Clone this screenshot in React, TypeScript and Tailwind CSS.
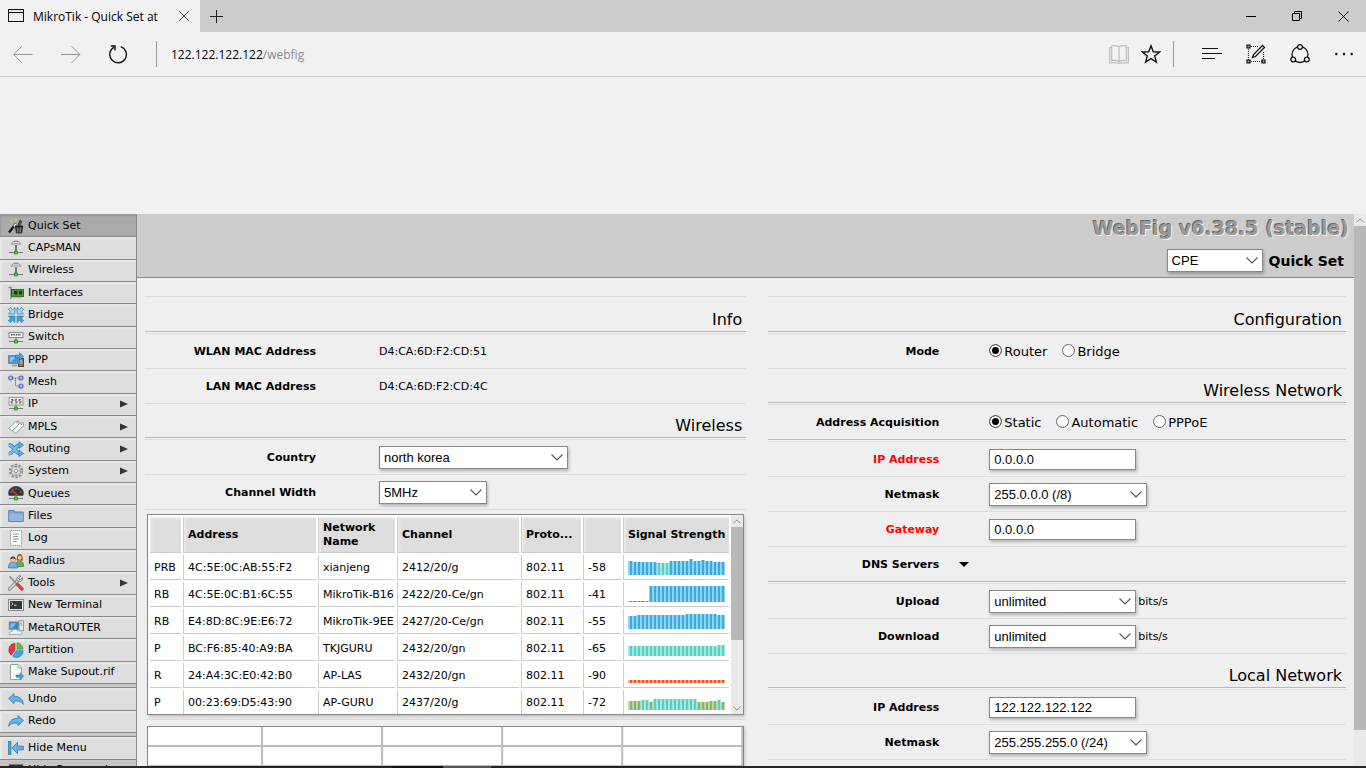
import React, { type ReactNode } from "react";

/* ---------- Sidebar icons (16 x 16) ---------- */

const Svg16 = ({ children }: { children: ReactNode }) => (
  <svg viewBox="0 0 16 16" className="h-4 w-4 shrink-0" aria-hidden="true">
    {children}
  </svg>
);

const NetBase = () => (
  <>
    <path d="M1 12.500H15" stroke="#777" />
    <rect x="6.500" y="11" width="3" height="3" fill="#3fd43f" stroke="#1d8a1d" strokeWidth=".7" />
  </>
);

const WandIcon = () => (
  <Svg16>
    <path d="M1 14.500 8 5.500" stroke="#111" strokeWidth="2.200" />
    <path d="M6 8.500 8 5.800" stroke="#eee" strokeWidth="2" />
    <path d="M7.500 8.500h7l-.8 6.500h-5.400z" fill="#3a3a3a" stroke="#111" strokeWidth=".7" />
    <path d="M9.500 9.500v5M11 9.500v5M12.500 9.500v5" stroke="#999" strokeWidth=".6" />
    <path d="M7 8.200h8" stroke="#111" strokeWidth="1.300" />
    <path d="m10 7 2-5 1.800 1.300L12 7.300z" fill="#555" stroke="#222" strokeWidth=".6" />
    <path d="m3.500 1 .5 1.500L5.500 3 4 3.500 3.500 5 3 3.500 1.500 3 3 2.500zM8 0l.4 1.200 1.200.4-1.200.4L8 3.200 7.600 2l-1.200-.4 1.200-.4zM3 6.500l.4.900.9.300-.9.300L3 9l-.3-1-1-.3 1-.3z" fill="#f5d22c" />
  </Svg16>
);

const AntennaIcon = () => (
  <Svg16>
    <path d="M3.800 4.800a4.200 3.600 0 0 1 8.400 0" fill="none" stroke="#8f8f8f" strokeWidth="1.300" />
    <path d="M5.800 5.300a2.200 2 0 0 1 4.400 0" fill="none" stroke="#a5a5a5" strokeWidth="1.200" />
    <path d="M8 5v7" stroke="#555" strokeWidth="1.500" />
    <NetBase />
  </Svg16>
);

const CardIcon = () => (
  <Svg16>
    <path d="M.5 2.500h2.500v11.500" fill="none" stroke="#888" strokeWidth="1.500" />
    <rect x="3.500" y="4.500" width="12" height="7" fill="#4c9a3f" stroke="#2b6b25" />
    <rect x="6" y="6" width="3.500" height="3.500" fill="#23331f" />
    <rect x="11" y="6" width="3" height="3.500" fill="#23331f" />
    <path d="M5 12.500h9" stroke="#d8b03c" strokeWidth="1.500" strokeDasharray="1.500 .7" />
  </Svg16>
);

const BridgeIcon = () => (
  <Svg16>
    <g stroke="#1f7bbd" strokeWidth=".7" strokeLinejoin="round">
      <path d="m.4 2.400 2-2 2.300 2.300L6.900.5v6.400H.5l2.200-2.200z" fill="#a5d9f6" />
      <path d="m15.600 2.400-2-2-2.300 2.300L9.100.5v6.400h6.400l-2.200-2.200z" fill="#a5d9f6" />
      <path d="m.4 13.600 2 2 2.300-2.300 2.200 2.200V9.100H.5l2.200 2.200z" fill="#35a2e4" />
      <path d="m15.600 13.600-2 2-2.300-2.300-2.200 2.200V9.100h6.400l-2.200 2.200z" fill="#35a2e4" />
    </g>
  </Svg16>
);

const SwitchIcon = () => (
  <Svg16>
    <rect x="1" y="3.500" width="14" height="5" fill="#f7f7f7" stroke="#888" />
    <path d="M3 5.800h10" stroke="#444" strokeWidth="1.600" strokeDasharray="1.500 .9" />
    <path d="M8 9v3" stroke="#777" />
    <NetBase />
  </Svg16>
);

const PppIcon = () => (
  <Svg16>
    <rect x="10.500" y="6.500" width="5" height="8" fill="#777" stroke="#444" />
    <path d="M12 9h2.500M12 11h2.500" stroke="#ccc" />
    <rect x=".5" y="3.500" width="10" height="8" fill="#3c98dc" stroke="#8a8a8a" />
    <path d="M2 5h6L3 10H2z" fill="#8cc8f0" />
    <path d="M4 13.500h5" stroke="#999" strokeWidth="1.800" />
    <path d="M7.500 3.300h4V.8l4 3.700-4 3.700V5.700h-4z" fill="#45aef0" stroke="#176fae" strokeWidth=".7" />
  </Svg16>
);

const MeshIcon = () => (
  <Svg16>
    <path d="M5 4h5.500M7.500 4v8H11" fill="none" stroke="#777" strokeDasharray="1.500 .6" />
    <g fill="#b3c1f7" stroke="#4a62c8" strokeWidth="1.200">
      <circle cx="2.700" cy="4" r="2" />
      <circle cx="13" cy="4" r="2" />
      <circle cx="13" cy="12" r="2" />
    </g>
  </Svg16>
);

const IpIcon = () => (
  <Svg16>
    <rect x="1" y="1.500" width="14" height="7.500" fill="#f4f4f4" stroke="#999" />
    <path d="M3 3.500h2v1.600H3V7h2.200M9 3.500H7v1.600h2V7H6.800M13 3.500h-2v1.600h2V7h-2.200" fill="none" stroke="#555" strokeWidth=".9" />
    <path d="M8 9v3" stroke="#777" />
    <NetBase />
  </Svg16>
);

const TagsIcon = () => (
  <Svg16>
    <g fill="#f2f7f5" stroke="#8f9c99" strokeWidth=".9" strokeLinejoin="round">
      <path d="m.7 9.500 7-7 3-.5.3 3-7 7z" />
      <path d="m4.500 12 7.500-8 3.300-.3.200 3-7.500 7.800z" />
    </g>
    <circle cx="13.500" cy="5.200" r=".8" fill="#888" />
    <circle cx="9" cy="3.800" r=".7" fill="#888" />
  </Svg16>
);

const RoutingIcon = () => (
  <Svg16>
    <g fill="none" strokeLinejoin="round">
      <path d="M.8 12.500c6 0 5.500-8.500 11.500-8.500M.8 4c6 0 5.500 8.500 11.500 8.500" stroke="#2478b5" strokeWidth="3.800" />
      <path d="M.8 12.500c6 0 5.500-8.500 11.500-8.500M.8 4c6 0 5.500 8.500 11.500 8.500" stroke="#6fbcf0" strokeWidth="2.500" />
    </g>
    <path d="m11 .8 4.600 3.300L11 7.300zM11 9.200l4.600 3.300-4.600 3z" fill="#58aeea" stroke="#2478b5" strokeWidth=".7" />
  </Svg16>
);

const GearIcon = () => (
  <Svg16>
    <circle cx="8" cy="8" r="6.300" fill="none" stroke="#8d8d8d" strokeWidth="1.800" strokeDasharray="2.400 1.550" />
    <circle cx="8" cy="8" r="4.800" fill="#dcdcdc" stroke="#8d8d8d" strokeWidth=".9" />
    <circle cx="8" cy="8" r="1.700" fill="#eee" stroke="#8d8d8d" strokeWidth=".9" />
    <path d="M8 3.500v2M8 10.500v2M3.500 8h2M10.500 8h2" stroke="#999" />
  </Svg16>
);

const GaugeIcon = () => (
  <Svg16>
    <path d="M1 9.500C-.8 4 3.500.5 8 .5s8.800 3.500 7 9z" fill="#333" stroke="#555" strokeWidth=".8" />
    <path d="M2.500 6h1.500M4.500 3l1 1M8 2V3.500M11.500 3l-1 1M13.500 6H12" stroke="#bbb" strokeWidth=".8" />
    <path d="m4 4 5.500 5.200" stroke="#e6392c" strokeWidth="1.400" />
    <path d="M8 9.500v3" stroke="#777" />
    <NetBase />
  </Svg16>
);

const FolderIcon = () => (
  <Svg16>
    <path d="M.7 13.500v-11h5.500l1.200 1.500h7.900v9.500z" fill="#7ca6d0" stroke="#4f7fb0" strokeWidth=".9" />
    <path d="M1.300 5.500h13.400v7.500H1.300z" fill="#94b8dc" />
  </Svg16>
);

const LogIcon = () => (
  <Svg16>
    <path d="M2.500.5h11v15h-11z" fill="#f6faf9" stroke="#94a8a5" strokeDasharray="1.500 .6" />
    <path d="M5 4h6M5 6.500h5M5 9h6M5 11.500h3.500" stroke="#7fa39d" />
  </Svg16>
);

const UsersIcon = () => (
  <Svg16>
    <path d="M8 13.500c0-5 1.500-5.500 3.700-5.500s3.800 1 3.800 5.500z" fill="#5bb95a" stroke="#2e7a32" strokeWidth=".7" />
    <path d="M8.700 7.500c-.7-9 7-8.500 6 0z" fill="#b34a1c" />
    <circle cx="11.700" cy="4.800" r="2" fill="#f3c9a0" />
    <path d="M.5 15c0-4.500 1.500-5.500 4.500-5.500s4.700 1 4.700 5.500z" fill="#6bb0e8" stroke="#2b6ca8" strokeWidth=".7" />
    <circle cx="5" cy="6.800" r="2.600" fill="#f3c9a0" stroke="#a96b3b" strokeWidth=".5" />
    <path d="M2.300 6.500C2 2.500 8 2.500 7.700 6.500 6.500 5.200 4 5.200 2.300 6.500z" fill="#5b3718" />
  </Svg16>
);

const ToolsIcon = () => (
  <Svg16>
    <path d="m1.500 14 9-9" stroke="#777" strokeWidth="3.400" strokeLinecap="round" />
    <path d="m1.500 14 9-9" stroke="#d5d5d5" strokeWidth="1.900" strokeLinecap="round" />
    <path d="M14.500 2.500 12 5 10.500 3.500 13 1C10 .2 8.300 2.800 9.300 5.300c1 1.700 5.700 2.200 5.200-2.800z" fill="#d5d5d5" stroke="#777" strokeWidth=".8" />
    <path d="m1.500 1.500 7.500 7.500" stroke="#888" strokeWidth="1.700" />
    <path d="m9.500 9.500 4.500 4.500" stroke="#d93f35" strokeWidth="3.300" strokeLinecap="round" />
  </Svg16>
);

const TerminalIcon = () => (
  <Svg16>
    <rect x=".5" y="2.500" width="15" height="11" fill="#e4e4e4" stroke="#8a8a8a" />
    <rect x="2" y="4" width="12" height="8" fill="#33363a" />
    <path d="M3.500 5.500 5 6.700 3.500 8M6 8.300h2.500" fill="none" stroke="#eee" strokeWidth=".9" />
  </Svg16>
);

const MetaIcon = () => (
  <Svg16>
    <rect x="11" y=".7" width="4.500" height="10" fill="#e8e8e8" stroke="#888" strokeWidth=".8" />
    <path d="M12.300 3h2M12.300 5h2" stroke="#999" />
    <rect x="1.200" y="2" width="9.500" height="7.500" fill="#2f86d0" stroke="#8a8a8a" strokeWidth=".9" />
    <path d="M2.500 3.300h6l-4.500 5h-1.500z" fill="#7cbcee" />
    <path d="M1 14.300c-.3-2 1.500-3 3-2.500.8-3 4.500-3.200 5.500-.7 2-.7 4.300 0 4.500 3.200z" fill="#fafafa" stroke="#9a9a9a" strokeWidth=".8" />
  </Svg16>
);

const PieIcon = () => (
  <Svg16>
    <path d="M7 1.300A6.700 6.700 0 0 0 3.300 13.200L7 8z" fill="#e2373c" stroke="#a31c22" strokeWidth=".6" />
    <path d="M9 .8A6.500 6.500 0 0 1 15 7.200H9z" fill="#63c04e" stroke="#3a8a2b" strokeWidth=".6" />
    <path d="M15.200 8.700H8.300l-3.600 5.500c3.800 2.700 10.300.8 10.500-5.500z" fill="#3ea6dc" stroke="#1e75a8" strokeWidth=".6" />
  </Svg16>
);

const SupoutIcon = () => (
  <Svg16>
    <path d="M2.500.5H10l3.500 3.500v11.500h-11z" fill="#f8fbfa" stroke="#8ea29f" />
    <path d="M10 .7V4h3.300" fill="#dbe5e3" stroke="#8ea29f" strokeWidth=".8" />
    <path d="M8 11h4V8.800l3.700 3.300-3.700 3.300v-2.200H8z" fill="#3fa7ec" stroke="#1c6fa9" strokeWidth=".6" />
  </Svg16>
);

const UndoIcon = () => (
  <Svg16>
    <path d="M.6 7.500 6 2.700v2.700c5 0 8.700 1.600 9.300 8-2-3-4.500-3.700-9.300-3.400v2.700z" fill="#65b5ec" stroke="#2478b5" strokeWidth=".8" strokeLinejoin="round" />
  </Svg16>
);

const RedoIcon = () => (
  <Svg16>
    <path d="M15.400 7.500 10 2.700v2.700c-5 0-8.700 1.600-9.300 8 2-3 4.500-3.700 9.300-3.400v2.700z" fill="#65b5ec" stroke="#2478b5" strokeWidth=".8" strokeLinejoin="round" />
  </Svg16>
);

const HideIcon = () => (
  <Svg16>
    <rect x=".6" y="1.500" width="2.300" height="13" fill="#45a7e6" stroke="#1f74b3" strokeWidth=".7" />
    <path d="M3.800 8 9.500 2.500v3.700h5.800v3.600H9.500v3.700z" fill="#65b5ec" stroke="#1f74b3" strokeWidth=".8" />
  </Svg16>
);

const PasswordIcon = () => (
  <Svg16>
    <rect x="1" y="2.500" width="14" height="11" fill="#333" />
  </Svg16>
);

/* ---------- Sidebar ---------- */

type Item = { label: string; icon: () => ReactNode; sub?: boolean };

const mainItems: Item[] = [
  { label: "Quick Set", icon: WandIcon },
  { label: "CAPsMAN", icon: AntennaIcon },
  { label: "Wireless", icon: AntennaIcon },
  { label: "Interfaces", icon: CardIcon },
  { label: "Bridge", icon: BridgeIcon },
  { label: "Switch", icon: SwitchIcon },
  { label: "PPP", icon: PppIcon },
  { label: "Mesh", icon: MeshIcon },
  { label: "IP", icon: IpIcon, sub: true },
  { label: "MPLS", icon: TagsIcon, sub: true },
  { label: "Routing", icon: RoutingIcon, sub: true },
  { label: "System", icon: GearIcon, sub: true },
  { label: "Queues", icon: GaugeIcon },
  { label: "Files", icon: FolderIcon },
  { label: "Log", icon: LogIcon },
  { label: "Radius", icon: UsersIcon },
  { label: "Tools", icon: ToolsIcon, sub: true },
  { label: "New Terminal", icon: TerminalIcon },
  { label: "MetaROUTER", icon: MetaIcon },
  { label: "Partition", icon: PieIcon },
  { label: "Make Supout.rif", icon: SupoutIcon },
];

function MenuItem({ item, active, pressed }: { item: Item; active?: boolean; pressed?: boolean }) {
  const Icon = item.icon;
  const tone = active
    ? "bg-[#aaaaaa] shadow-[inset_1px_1px_2px_#999999]"
    : pressed
      ? "bg-[#c4c4c4]"
      : "bg-[#dddddd] shadow-[inset_2px_2px_2px_#e9e9e9]";
  return (
    <button
      type="button"
      className={`flex min-h-0 w-full flex-1 items-center gap-1 border-b border-[#888888] pr-2 pl-2 text-left text-[11px] leading-[14px] ${tone}`}
    >
      <Icon />
      <span className="flex-1 whitespace-nowrap">{item.label}</span>
      {item.sub && (
        <svg viewBox="0 0 8 8" className="h-2 w-2" aria-hidden="true">
          <path d="M0 .5 8 4 0 7.500z" fill="#333" />
        </svg>
      )}
    </button>
  );
}

function Sidebar() {
  return (
    <nav className="flex w-[137px] shrink-0 flex-col gap-[3px] overflow-hidden border-r border-[#888888] bg-[#c8c8c8]">
      <div className="flex h-[470px] shrink-0 flex-col border-t border-[#999999]">
        {mainItems.map((item, i) => (
          <MenuItem key={item.label} item={item} active={i === 0} />
        ))}
      </div>
      <div className="flex h-[46px] shrink-0 flex-col border-t border-[#888888]">
        <MenuItem item={{ label: "Undo", icon: UndoIcon }} />
        <MenuItem item={{ label: "Redo", icon: RedoIcon }} />
      </div>
      <div className="flex h-[46px] shrink-0 flex-col border-t border-[#888888]">
        <MenuItem item={{ label: "Hide Menu", icon: HideIcon }} />
        <MenuItem item={{ label: "Hide Passwords", icon: PasswordIcon }} pressed />
      </div>
    </nav>
  );
}

/* ---------- Form controls ---------- */

const Chevron = ({ className }: { className: string }) => (
  <svg viewBox="0 0 12 7" className={className} aria-hidden="true">
    <path d="M.5.5 6 6 11.500.5" fill="none" stroke="currentColor" strokeWidth="1.100" />
  </svg>
);

function Select({ id, value, width, label }: { id?: string; value: string; width: string; label?: string }) {
  return (
    <span className={`relative block ${width}`}>
      <select
        id={id}
        aria-label={label}
        className="block h-[23px] w-full appearance-none border border-[#888888] bg-white pr-5 pl-1 font-['Liberation_Sans',Arial,sans-serif] text-[13px] leading-[19px] text-black shadow-[1px_2px_3px_rgba(0,0,0,0.25)]"
      >
        <option>{value}</option>
      </select>
      <Chevron className="pointer-events-none absolute top-2 right-[5px] h-[7px] w-3 text-[#555555]" />
    </span>
  );
}

const TextInput = ({ id, value }: { id: string; value: string }) => (
  <input
    id={id}
    type="text"
    defaultValue={value}
    className="h-[21px] w-[147px] border border-[#888888] bg-white px-1 font-['Liberation_Sans',Arial,sans-serif] text-[13px] leading-[17px] text-black shadow-[1px_2px_3px_rgba(0,0,0,0.25)]"
  />
);

const Radio = ({ name, label, checked }: { name: string; label: string; checked?: boolean }) => (
  <label className="flex items-center gap-[2px] text-[13px] leading-4">
    <input
      type="radio"
      name={name}
      defaultChecked={checked}
      className="mb-[3px] h-[13px] w-[13px] appearance-none rounded-full border border-[#666666] bg-white checked:bg-black checked:shadow-[inset_0_0_0_2px_#ffffff]"
    />
    {label}
  </label>
);

const DoubleLine = () => <div className="h-[2px] border-b border-[#dddddd] bg-[#f6f6f6]" />;

const Title = ({ children }: { children: ReactNode }) => (
  <>
    <h2 className="flex h-[34px] items-end justify-end border-b border-[#b8b8b8] pr-1 pb-px text-[16px] leading-5">
      {children}
    </h2>
    <DoubleLine />
  </>
);

function Row({
  label,
  htmlFor,
  red,
  wide,
  strong,
  marker,
  children,
}: {
  label: string;
  htmlFor?: string;
  red?: boolean;
  wide?: boolean;
  strong?: boolean;
  marker?: ReactNode;
  children?: ReactNode;
}) {
  return (
    <>
      <div className={`flex h-[35px] items-center border-b pt-px ${strong ? "border-[#b8b8b8]" : "border-[#dddddd]"}`}>
        <label
          htmlFor={htmlFor}
          className={`w-[171px] shrink-0 text-right text-[11px] leading-[14px] font-bold ${red ? "text-[#ff0000]" : ""}`}
        >
          {label}
        </label>
        <div className={`flex shrink-0 justify-center ${wide ? "w-[63px]" : "w-[50px]"}`}>{marker}</div>
        <div className="flex items-center gap-[2px] text-[11px] leading-[14px]">{children}</div>
      </div>
      {strong && <DoubleLine />}
    </>
  );
}

/* ---------- Scan table ---------- */

const hues = {
  blue: ["#90d2f0", "#3aabe0"],
  teal: ["#a4e6e0", "#58cfc6"],
  green: ["#b9d4a6", "#88b56a"],
  orange: ["#f8a283", "#f0552a"],
} as const;

type Segment = [from: number, to: number, height: number, hue: keyof typeof hues];

function SignalBars({ segments }: { segments: Segment[] }) {
  const stripes: ReactNode[] = [];
  for (const [from, to, height, hue] of segments) {
    stripes.push(
      <rect key={`${from}b`} x={from} y={16 - height} width={to - from} height={height} fill={hues[hue][0]} />,
    );
    for (let x = 2; x < 97; x += 4) {
      const a = Math.max(x, from);
      const b = Math.min(x + 2, to);
      if (b > a) {
        stripes.push(
          <rect key={`${from}-${x}`} x={a} y={16 - height} width={b - a} height={height} fill={hues[hue][1]} />,
        );
      }
    }
  }
  return (
    <svg viewBox="0 0 97 16" className="block h-4 w-[97px]" shapeRendering="crispEdges" aria-hidden="true">
      {stripes}
    </svg>
  );
}

const stations: { cells: string[]; bars: Segment[] }[] = [
  {
    cells: ["PRB", "4C:5E:0C:AB:55:F2", "xianjeng", "2412/20/g", "802.11", "-58"],
    bars: [
      [0, 5, 14, "blue"], [5, 29, 13, "blue"], [29, 41, 12, "teal"], [41, 61, 14, "blue"], [61, 65, 16, "blue"],
      [65, 73, 14, "blue"], [73, 77, 15, "blue"], [77, 85, 14, "blue"], [85, 97, 13, "blue"],
    ],
  },
  {
    cells: ["RB", "4C:5E:0C:B1:6C:55", "MikroTik-B16", "2422/20-Ce/gn", "802.11", "-41"],
    bars: [[0, 21, 1, "orange"], [21, 97, 16, "blue"]],
  },
  {
    cells: ["RB", "E4:8D:8C:9E:E6:72", "MikroTik-9EE", "2427/20-Ce/gn", "802.11", "-55"],
    bars: [[0, 9, 13, "blue"], [9, 57, 14, "blue"], [57, 89, 15, "blue"], [89, 97, 14, "blue"]],
  },
  {
    cells: ["P", "BC:F6:85:40:A9:BA", "TKJGURU", "2432/20/gn", "802.11", "-65"],
    bars: [[0, 89, 10, "teal"], [89, 97, 11, "teal"]],
  },
  {
    cells: ["R", "24:A4:3C:E0:42:B0", "AP-LAS", "2432/20/gn", "802.11", "-90"],
    bars: [[0, 97, 3, "orange"]],
  },
  {
    cells: ["P", "00:23:69:D5:43:90", "AP-GURU", "2437/20/g", "802.11", "-72"],
    bars: [
      [0, 13, 9, "green"], [13, 21, 10, "teal"], [21, 25, 8, "green"], [25, 69, 11, "teal"],
      [69, 81, 8, "green"], [81, 89, 9, "green"], [89, 93, 10, "teal"], [93, 97, 8, "green"],
    ],
  },
];

const headings = ["", "Address", "Network Name", "Channel", "Proto...", "", "Signal Strength"];

function ScanTable() {
  return (
    <div className="flex h-[201px] border border-[#888888] bg-white shadow-[1px_2px_3px_rgba(0,0,0,0.2)]">
      <div className="min-w-0 flex-1 overflow-hidden">
        <table className="w-full table-fixed border-separate border-spacing-[2px] text-left text-[11px] leading-[14px]">
          <colgroup>
            <col className="w-[31px]" />
            <col className="w-[133px]" />
            <col className="w-[77px]" />
            <col className="w-[122px]" />
            <col className="w-[60px]" />
            <col className="w-[38px]" />
            <col />
          </colgroup>
          <thead>
            <tr className="h-9">
              {headings.map((h, i) => (
                <th
                  key={i}
                  className={`border-b border-[#cccccc] bg-[#dddddd] p-0 pt-px pl-1 align-middle font-bold shadow-[inset_2px_2px_2px_#e9e9e9] ${i > 0 ? "border-l" : ""} ${i === 2 ? "" : "whitespace-nowrap"}`}
                >
                  {h}
                </th>
              ))}
            </tr>
          </thead>
          <tbody>
            {stations.map((s) => (
              <tr key={s.cells[1]} className="h-[25px]">
                {s.cells.map((c, i) => (
                  <td
                    key={i}
                    className={`overflow-hidden border-b border-[#cccccc] p-0 pt-[2px] pl-1 whitespace-nowrap ${i > 0 ? "border-l" : ""}`}
                  >
                    {c}
                  </td>
                ))}
                <td className="border-b border-l border-[#cccccc] p-0 pl-1">
                  <SignalBars segments={s.bars} />
                </td>
              </tr>
            ))}
          </tbody>
        </table>
      </div>
      <div className="flex w-3 shrink-0 flex-col items-center bg-[#e9e9e9]">
        <div className="flex h-3 items-center">
          <Chevron className="h-[5px] w-2 rotate-180 text-[#666666]" />
        </div>
        <div className="h-[113px] w-full bg-[#b8b8b8]" />
        <div className="mt-auto flex h-3 items-center">
          <Chevron className="h-[5px] w-2 text-[#666666]" />
        </div>
      </div>
    </div>
  );
}

function Graph() {
  return (
    <div className="h-[180px] overflow-hidden border border-[#888888] bg-white shadow-[1px_2px_3px_rgba(0,0,0,0.2)]">
      <svg width="100%" height="180" viewBox="0 0 595 180" preserveAspectRatio="none" aria-hidden="true">
        <path
          d="M114 0V180M234 0V180M354 0V180M474 0V180M594 0V180M0 19H595M0 39H595M0 59H595M0 79H595"
          stroke="#bcbcbc"
          strokeWidth="2"
        />
      </svg>
    </div>
  );
}

/* ---------- Browser frame ---------- */

function BrowserBar() {
  return (
    <header className="shrink-0 font-['Open_Sans','Noto_Sans',sans-serif] text-black">
      <div className="flex h-8 bg-[#cccccc]">
        <div className="flex w-[200px] items-center bg-[#f1f1f1] pl-2">
          <svg viewBox="0 0 16 14" className="h-[14px] w-4" aria-hidden="true">
            <rect x=".5" y=".5" width="15" height="12" fill="none" stroke="#111" />
            <path d="M0 3.500h16" stroke="#111" />
          </svg>
          <span className="ml-[9px] flex-1 pt-[2px] text-[12px] leading-4 whitespace-nowrap">MikroTik - Quick Set at</span>
          <button type="button" aria-label="Close tab" className="mr-[11px]">
            <svg viewBox="0 0 10 10" className="h-[10px] w-[10px]">
              <path d="m0 0 10 10M10 0 0 10" stroke="#333" />
            </svg>
          </button>
        </div>
        <button type="button" aria-label="New tab" className="ml-[10px]">
          <svg viewBox="0 0 13 13" className="h-[13px] w-[13px]">
            <path d="M6.500 0v13M0 6.500h13" stroke="#222" />
          </svg>
        </button>
        <div className="ml-auto flex items-center gap-[35px] pr-[17px]">
          <button type="button" aria-label="Minimize">
            <svg viewBox="0 0 11 11" className="h-[11px] w-[11px]">
              <path d="M0 5.500h10" stroke="#000" />
            </svg>
          </button>
          <button type="button" aria-label="Restore">
            <svg viewBox="0 0 11 11" className="h-[11px] w-[11px]">
              <path d="M.5 2.500h7v7h-7zM2.500 2.500v-2h7v7h-2" fill="none" stroke="#000" />
            </svg>
          </button>
          <button type="button" aria-label="Close">
            <svg viewBox="0 0 11 11" className="h-[11px] w-[11px]">
              <path d="m.5.5 10 10M10.500.5l-10 10" stroke="#000" />
            </svg>
          </button>
        </div>
      </div>
      <div className="flex h-[45px] items-center border-b border-[#cccccc] bg-[#f1f1f1] pl-[13px]">
        <button type="button" aria-label="Back">
          <svg viewBox="0 0 20 18" className="h-[18px] w-5">
            <path d="M9 1 .700 9.500 9 18M.7 9.500H19.500" fill="none" stroke="#999" />
          </svg>
        </button>
        <button type="button" aria-label="Forward" className="ml-7">
          <svg viewBox="0 0 20 18" className="h-[18px] w-5">
            <path d="M10.500 1 18.800 9.500 10.500 18M18.800 9.500H0" fill="none" stroke="#999" />
          </svg>
        </button>
        <button type="button" aria-label="Refresh" className="ml-[27px]">
          <svg viewBox="0 0 20 20" className="h-5 w-5">
            <path d="M12.800 2.600a8.300 8.300 0 1 1-6.600.5" fill="none" stroke="#111" strokeWidth="1.400" />
            <path d="M2.800 2h4.200v4.500" fill="none" stroke="#111" strokeWidth="1.400" />
          </svg>
        </button>
        <div className="ml-[28px] h-[26px] w-px bg-[#999999]" />
        <div className="ml-[14px] pt-[2px] text-[12px] leading-4">
          122.122.122.122<span className="text-[#8a8a8a]">/webfig</span>
        </div>
        <div className="ml-auto flex items-center">
          <button type="button" aria-label="Reading view">
            <svg viewBox="0 0 20 19" className="h-[19px] w-5">
              <path
                d="M.7 2.500h2V1c3-.5 5.500-.5 7.300.8C11.800.5 14.300.5 17.300 1v1.500h2v15.300h-7.800L10 18.500l-1.500-.7H.7zM10 1.800v14.500M2.700 2.500v13.200c3-.5 5.800-.3 7.300.8 1.500-1.100 4.300-1.300 7.300-.8V2.500"
                fill="none"
                stroke="#bdbdbd"
                strokeWidth="1.200"
              />
            </svg>
          </button>
          <button type="button" aria-label="Favorite" className="ml-3">
            <svg viewBox="0 0 20 20" className="h-5 w-5">
              <path
                d="m10 1.800 2.300 5.900 6.300.3-4.900 4 1.700 6.100L10 14.700l-5.400 3.400L6.300 12 1.400 8l6.300-.3z"
                fill="none"
                stroke="#111"
                strokeWidth="1.400"
              />
            </svg>
          </button>
          <div className="ml-3 h-[26px] w-px bg-[#999999]" />
          <button type="button" aria-label="Hub" className="ml-[28px]">
            <svg viewBox="0 0 20 12" className="h-3 w-5">
              <path d="M0 .5h16M0 5.500h20M0 10.500h13" stroke="#111" strokeWidth="1.200" />
            </svg>
          </button>
          <button type="button" aria-label="Web note" className="ml-6">
            <svg viewBox="0 0 20 20" className="h-5 w-5">
              <path d="M5 2.500h8M2.500 5v11M5 17.500h11M17.500 8v8" stroke="#222" strokeWidth="1.200" strokeDasharray="1 1" />
              <path d="M1 1h3v3H1zM1 16h3v3H1zM16 16h3v3h-3z" fill="#999" stroke="#111" strokeWidth="1.200" />
              <path d="m6.500 13.500 1-3 9-9 2 2-9 9z" fill="#f1f1f1" stroke="#111" strokeWidth="1.300" />
            </svg>
          </button>
          <button type="button" aria-label="Share" className="ml-6">
            <svg viewBox="0 0 20 20" className="h-5 w-5">
              <circle cx="10" cy="10.500" r="8" fill="none" stroke="#111" strokeWidth="1.300" />
              <g fill="#f1f1f1" stroke="#111" strokeWidth="1.300">
                <circle cx="10" cy="3" r="2.400" />
                <circle cx="3.200" cy="15.500" r="2.400" />
                <circle cx="16.800" cy="15.500" r="2.400" />
              </g>
            </svg>
          </button>
          <button type="button" aria-label="More" className="mr-[13px] ml-[25px]">
            <svg viewBox="0 0 18 4" className="h-1 w-[18px]">
              <g fill="#111">
                <circle cx="1.300" cy="2" r="1.200" />
                <circle cx="9" cy="2" r="1.200" />
                <circle cx="16.700" cy="2" r="1.200" />
              </g>
            </svg>
          </button>
        </div>
      </div>
    </header>
  );
}

/* ---------- Page ---------- */

export default function App() {
  return (
    <div className="flex h-screen flex-col overflow-hidden bg-[#f1f1f1] font-['DejaVu_Sans',Verdana,sans-serif] text-black">
      <BrowserBar />
      <div className="h-[137px] shrink-0" />
      <div className="flex min-h-0 flex-1">
        <Sidebar />
        <main className="flex min-w-0 flex-1 flex-col overflow-hidden bg-[#efefef]">
          <div className="flex h-16 shrink-0 flex-col items-end border-b border-[#888888] bg-[#cccccc]">
            <h1 className="pt-[3px] pr-[5px] text-[19px] leading-[22px] font-bold text-[#9a9a9a] [text-shadow:-1px_-1px_0_#666666,1px_1px_0_#f0f0f0]">
              WebFig v6.38.5 (stable)
            </h1>
            <div className="flex items-center gap-[6px] pt-[10px] pr-[10px]">
              <Select value="CPE" width="w-[96px]" label="Quick Set mode" />
              <span className="text-[14px] leading-[18px] font-bold">Quick Set</span>
            </div>
          </div>
          <div className="grid grid-cols-[51fr_49fr] gap-[22px] px-2 pt-[18px]">
            <section className="border-t border-[#dddddd] pt-px">
              <Title>Info</Title>
              <Row label="WLAN MAC Address" wide>
                D4:CA:6D:F2:CD:51
              </Row>
              <Row label="LAN MAC Address" wide>
                D4:CA:6D:F2:CD:4C
              </Row>
              <Title>Wireless</Title>
              <Row label="Country" htmlFor="country" wide>
                <Select id="country" value="north korea" width="w-[189px]" />
              </Row>
              <Row label="Channel Width" htmlFor="channel-width" wide>
                <Select id="channel-width" value="5MHz" width="w-[108px]" />
              </Row>
              <div className="border-b border-[#dddddd] px-[2px] pt-1 pb-1">
                <ScanTable />
              </div>
              <div className="px-[2px] pt-[6px]">
                <Graph />
              </div>
            </section>
            <section className="border-t border-[#dddddd] pt-px">
              <Title>Configuration</Title>
              <Row label="Mode">
                <div className="flex gap-[15px]">
                  <Radio name="mode" label="Router" checked />
                  <Radio name="mode" label="Bridge" />
                </div>
              </Row>
              <Title>Wireless Network</Title>
              <Row label="Address Acquisition" strong>
                <div className="flex gap-[15px]">
                  <Radio name="acquisition" label="Static" checked />
                  <Radio name="acquisition" label="Automatic" />
                  <Radio name="acquisition" label="PPPoE" />
                </div>
              </Row>
              <Row label="IP Address" htmlFor="wan-ip" red>
                <TextInput id="wan-ip" value="0.0.0.0" />
              </Row>
              <Row label="Netmask" htmlFor="wan-mask">
                <Select id="wan-mask" value="255.0.0.0 (/8)" width="w-[158px]" />
              </Row>
              <Row label="Gateway" htmlFor="gateway" red>
                <TextInput id="gateway" value="0.0.0.0" />
              </Row>
              <Row
                label="DNS Servers"
                strong
                marker={
                  <button type="button" aria-label="Add DNS server">
                    <svg viewBox="0 0 10 5" className="h-[5px] w-[10px]">
                      <path d="M0 0h10L5 5z" fill="#000" />
                    </svg>
                  </button>
                }
              />
              <Row label="Upload" htmlFor="upload">
                <Select id="upload" value="unlimited" width="w-[147px]" />
                <span>bits/s</span>
              </Row>
              <Row label="Download" htmlFor="download">
                <Select id="download" value="unlimited" width="w-[147px]" />
                <span>bits/s</span>
              </Row>
              <Title>Local Network</Title>
              <Row label="IP Address" htmlFor="lan-ip">
                <TextInput id="lan-ip" value="122.122.122.122" />
              </Row>
              <Row label="Netmask" htmlFor="lan-mask">
                <Select id="lan-mask" value="255.255.255.0 (/24)" width="w-[158px]" />
              </Row>
              <div className="h-[35px]" />
            </section>
          </div>
        </main>
        <div className="flex w-3 shrink-0 flex-col items-center bg-[#e9e9e9]">
          <div className="flex h-3 items-center">
            <Chevron className="h-[5px] w-2 rotate-180 text-[#666666]" />
          </div>
          <div className="h-[504px] w-full bg-[#b8b8b8]" />
        </div>
      </div>
      <footer className="flex h-[2px] shrink-0 bg-[#262626] pl-[392px]">
        <div className="w-[51px] bg-[#111111]" />
        <div className="w-12 bg-[#555555]" />
      </footer>
    </div>
  );
}
